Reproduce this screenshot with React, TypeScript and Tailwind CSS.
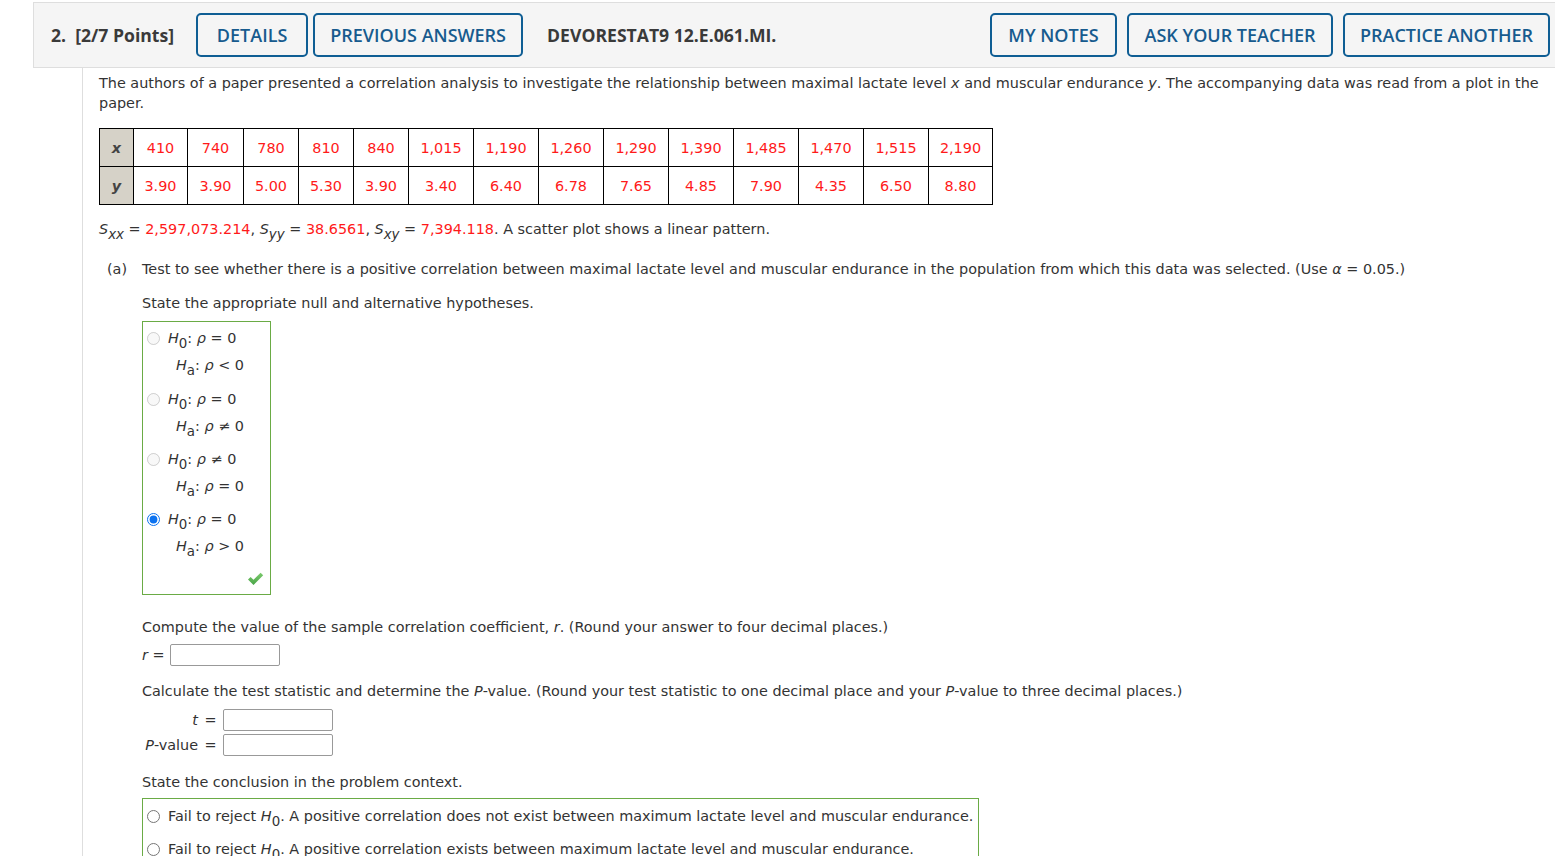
import React from 'react';

const xs = ['410', '740', '780', '810', '840', '1,015', '1,190', '1,260', '1,290', '1,390', '1,485', '1,470', '1,515', '2,190'];
const ys = ['3.90', '3.90', '5.00', '5.30', '3.90', '3.40', '6.40', '6.78', '7.65', '4.85', '7.90', '4.35', '6.50', '8.80'];
const widths = ['w-[54px]', 'w-[56px]', 'w-[55px]', 'w-[55px]', 'w-[55px]', 'w-[65px]', 'w-[65px]', 'w-[65px]', 'w-[65px]', 'w-[65px]', 'w-[65px]', 'w-[65px]', 'w-[65px]', 'w-[64px]'];

function Sub({ children, italic }: { children: React.ReactNode; italic?: boolean }) {
  return (
    <span className={italic ? 'relative top-[5px] text-[13.4px] italic leading-[0]' : 'relative top-[5px] text-[13.4px] leading-[0]'}>
      {children}
    </span>
  );
}

function HeaderButton({ label, w }: { label: string; w: string }) {
  return (
    <button className={`${w} h-[44px] rounded-[5px] border-2 border-[#0f5e94] text-[18px] font-semibold text-[#175b8e]`}>
      {label}
    </button>
  );
}

const hypotheses = [
  { h0: '=', ha: '<', checked: false },
  { h0: '=', ha: '≠', checked: false },
  { h0: '≠', ha: '=', checked: false },
  { h0: '=', ha: '>', checked: true },
];

const conclusions = [
  ['Fail to reject', 'A positive correlation does not exist between maximum lactate level and muscular endurance.'],
  ['Fail to reject', 'A positive correlation exists between maximum lactate level and muscular endurance.'],
  ['Reject', 'A positive correlation exists between maximum lactate level and muscular endurance.'],
  ['Reject', 'A positive correlation does not exist between maximum lactate level and muscular endurance.'],
];

export default function App() {
  return (
    <div className="min-h-[856px] overflow-hidden bg-white pt-[2px] text-[14.4px] leading-[20px] text-[#333] [font-family:'DejaVu_Sans',Verdana,sans-serif]">
      {/* question header */}
      <div className="ml-[33px] flex h-[66px] items-center border border-r-0 border-[#dedede] bg-[#f5f5f5] pl-[17px] pr-[5px] [font-family:'Open_Sans',sans-serif]">
        <span className="text-[17.6px] font-bold text-[#3a3a3a]">2.&nbsp; [2/7 Points]</span>
        <div className="ml-[22px] flex gap-[5px]">
          <HeaderButton label="DETAILS" w="w-[112px]" />
          <HeaderButton label="PREVIOUS ANSWERS" w="w-[210px]" />
        </div>
        <span className="ml-[24px] text-[17.6px] font-bold text-[#3a3a3a]">DEVORESTAT9 12.E.061.MI.</span>
        <div className="ml-auto flex gap-[10px]">
          <HeaderButton label="MY NOTES" w="w-[127px]" />
          <HeaderButton label="ASK YOUR TEACHER" w="w-[206px]" />
          <HeaderButton label="PRACTICE ANOTHER" w="w-[207px]" />
        </div>
      </div>

      {/* question body */}
      <div className="ml-[82px] min-h-[800px] border-l border-[#dedede] pl-[16px] pr-[6px] pt-[5px]">
        <p>
          The authors of a paper presented a correlation analysis to investigate the relationship between maximal lactate level <i>x</i> and muscular endurance <i>y</i>. The accompanying data was read from a plot in the paper.
        </p>

        <table className="mt-[15px] border-collapse">
          <tbody>
            <tr>
              <th className="h-[38px] w-[34px] border border-black bg-[#d6d2c8] text-center font-bold italic text-[#444]">x</th>
              {xs.map((v, i) => (
                <td key={v + i} className={`${widths[i]} h-[38px] border border-black text-center text-[#ff1a1a]`}>{v}</td>
              ))}
            </tr>
            <tr>
              <th className="h-[38px] w-[34px] border border-black bg-[#d6d2c8] text-center font-bold italic text-[#444]">y</th>
              {ys.map((v, i) => (
                <td key={v + i} className={`${widths[i]} h-[38px] border border-black text-center text-[#ff1a1a]`}>{v}</td>
              ))}
            </tr>
          </tbody>
        </table>

        <p className="mt-[14px]">
          <i>S</i><Sub italic>xx</Sub> = <span className="text-[#ff1a1a]">2,597,073.214</span>, <i>S</i><Sub italic>yy</Sub> ={' '}
          <span className="text-[#ff1a1a]">38.6561</span>, <i>S</i><Sub italic>xy</Sub> = <span className="text-[#ff1a1a]">7,394.118</span>. A scatter plot shows a linear pattern.
        </p>

        <div className="mt-[20px] flex">
          <div className="w-[43px] shrink-0 pl-[8px]">(a)</div>
          <div className="flex-1 pr-[12px]">
            <p>
              Test to see whether there is a positive correlation between maximal lactate level and muscular endurance in the population from which this data was selected. (Use <i>α</i> = 0.05.)
            </p>

            <p className="mt-[14px]">State the appropriate null and alternative hypotheses.</p>

            <div className="mt-[8px] flex w-[129px] flex-col border border-[#6aab45] pb-[8px] pl-[4px] pt-[6px]">
              {hypotheses.map((h, i) => (
                <div key={i} className={i === 0 ? '' : i === 1 ? 'mt-[14px]' : 'mt-[13px]'}>
                  <div className="flex h-[20px] items-center">
                    <input
                      type="radio"
                      name="hyp"
                      defaultChecked={h.checked}
                      disabled={!h.checked}
                      className="m-0 h-[13px] w-[13px] accent-[#0b72f0]"
                    />
                    <span className="ml-[8px]">
                      <i>H</i><Sub>0</Sub>: <i>ρ</i> {h.h0} 0
                    </span>
                  </div>
                  <div className="mt-[7px] h-[20px] pl-[29px]">
                    <i>H</i><Sub>a</Sub>: <i>ρ</i> {h.ha} 0
                  </div>
                </div>
              ))}
              <div className="mt-[16px] flex justify-end pr-[6px]">
                <svg width="17" height="14" viewBox="0 0 17 14">
                  <defs>
                    <linearGradient id="ck" x1="0" y1="0" x2="0" y2="1">
                      <stop offset="0" stopColor="#7ccb6e" />
                      <stop offset="1" stopColor="#49a447" />
                    </linearGradient>
                  </defs>
                  <path d="M1 7.5 L3.6 5 L6.5 7.8 L13.6 0.8 L16.2 3.3 L6.5 13 Z" fill="url(#ck)" />
                </svg>
              </div>
            </div>

            <p className="mt-[22px]">
              Compute the value of the sample correlation coefficient, <i>r</i>. (Round your answer to four decimal places.)
            </p>
            <div className="mt-[7px] flex items-center">
              <span className="w-[28px]"><i>r</i> =</span>
              <input className="h-[22px] w-[110px] rounded-[2px] border border-[#999] bg-white" />
            </div>

            <p className="mt-[15px]">
              Calculate the test statistic and determine the <i>P</i>-value. (Round your test statistic to one decimal place and your <i>P</i>-value to three decimal places.)
            </p>
            <div className="mt-[8px] flex flex-col gap-[3px]">
              <div className="flex items-center">
                <span className="w-[56px] text-right"><i>t</i></span>
                <span className="w-[25px] text-center">=</span>
                <input className="h-[22px] w-[110px] rounded-[2px] border border-[#999] bg-white" />
              </div>
              <div className="flex items-center">
                <span className="w-[56px] text-right"><i>P</i>-value</span>
                <span className="w-[25px] text-center">=</span>
                <input className="h-[22px] w-[110px] rounded-[2px] border border-[#999] bg-white" />
              </div>
            </div>

            <p className="mt-[16px]">State the conclusion in the problem context.</p>

            <div className="mt-[6px] flex w-fit flex-col gap-[13px] border border-[#6aab45] pb-[8px] pl-[4px] pr-[5px] pt-[7px]">
              {conclusions.map(([a, b], i) => (
                <div key={i} className="flex h-[20px] items-center">
                  <input type="radio" name="concl" className="m-0 h-[13px] w-[13px]" />
                  <span className="ml-[8px]">
                    {a} <i>H</i><Sub>0</Sub>. {b}
                  </span>
                </div>
              ))}
            </div>
          </div>
        </div>
      </div>
    </div>
  );
}
